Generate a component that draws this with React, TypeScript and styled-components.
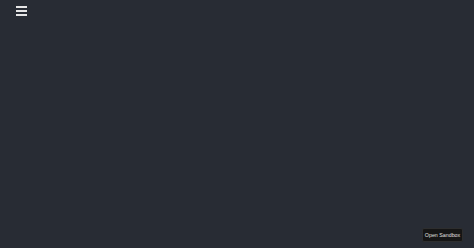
import React from "react";
import styled, { createGlobalStyle } from "styled-components";

const Global = createGlobalStyle`
  html, body { margin: 0; padding: 0; height: 100%; }
  body { background: #282c34; font-family: "Liberation Sans", Arial, sans-serif; }
  #root { height: 100%; }
`;

const Page = styled.div`
  position: relative;
  width: 100%;
  height: 100vh;
  background: #282c34;
  overflow: hidden;
`;

const Header = styled.header`
  display: flex;
  align-items: center;
  padding: 6px 16px;
`;

const MenuButton = styled.button`
  display: flex;
  flex-direction: column;
  gap: 2px;
  padding: 0;
  margin: 0;
  border: 0;
  background: transparent;
  cursor: pointer;
`;

const Bar = styled.span`
  display: block;
  width: 11px;
  height: 2px;
  background: #e6e6e6;
`;

const SandboxButton = styled.a`
  position: absolute;
  right: 11px;
  bottom: 6px;
  display: flex;
  align-items: center;
  justify-content: center;
  width: 41px;
  height: 14px;
  padding: 0;
  background: #151515;
  border: 1px solid #2e2e2e;
  border-radius: 2px;
  color: #e0e0e0;
  font-family: "Liberation Sans", Arial, sans-serif;
  font-size: 5.3px;
  white-space: nowrap;
  box-sizing: border-box;
  text-decoration: none;
`;

export default function App() {
  return (
    <>
      <Global />
      <Page>
        <Header>
          <MenuButton aria-label="menu">
            <Bar />
            <Bar />
            <Bar />
          </MenuButton>
        </Header>
        <SandboxButton>Open Sandbox</SandboxButton>
      </Page>
    </>
  );
}
